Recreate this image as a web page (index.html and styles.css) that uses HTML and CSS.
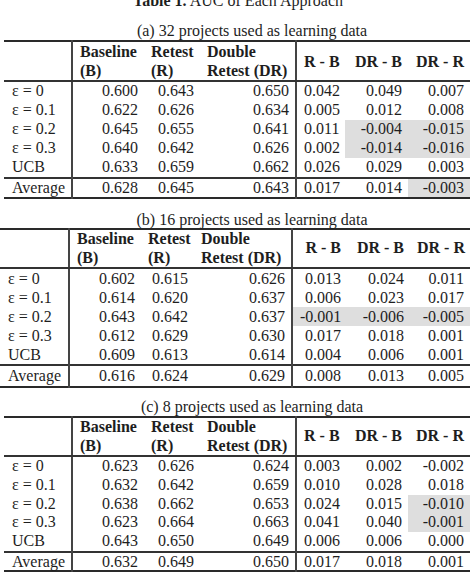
FILE: index.html
```html
<!DOCTYPE html>
<html>
<head>
<meta charset="utf-8">
<link rel="stylesheet" href="styles.css">
</head>
<body>
<div class="title"><b>Table 1.</b> AUC of Each Approach</div>

<div class="caption cap-a">(a) 32 projects used as learning data</div>
<table class="auc auc-a">
  <colgroup><col class="c1"><col class="c2"><col class="c3"><col class="c4"><col class="c5"><col class="c6"><col class="c7"></colgroup>
  <thead>
    <tr>
      <th class="lab"></th>
      <th class="hl">Baseline<br>(B)</th>
      <th class="hl">Retest<br>(R)</th>
      <th class="hl vr">Double<br>Retest (DR)</th>
      <th class="hr">R - B</th>
      <th class="hr">DR - B</th>
      <th class="hr">DR - R</th>
    </tr>
  </thead>
  <tbody>
    <tr><td class="lab">ε = 0</td><td>0.600</td><td>0.643</td><td class="vr">0.650</td><td>0.042</td><td>0.049</td><td>0.007</td></tr>
    <tr><td class="lab">ε = 0.1</td><td>0.622</td><td>0.626</td><td class="vr">0.634</td><td>0.005</td><td>0.012</td><td>0.008</td></tr>
    <tr><td class="lab">ε = 0.2</td><td>0.645</td><td>0.655</td><td class="vr">0.641</td><td>0.011</td><td class="sh">-0.004</td><td class="sh">-0.015</td></tr>
    <tr><td class="lab">ε = 0.3</td><td>0.640</td><td>0.642</td><td class="vr">0.626</td><td>0.002</td><td class="sh">-0.014</td><td class="sh">-0.016</td></tr>
    <tr><td class="lab">UCB</td><td>0.633</td><td>0.659</td><td class="vr">0.662</td><td>0.026</td><td>0.029</td><td>0.003</td></tr>
    <tr class="avg"><td class="lab">Average</td><td>0.628</td><td>0.645</td><td class="vr">0.643</td><td>0.017</td><td>0.014</td><td class="sh">-0.003</td></tr>
  </tbody>
</table>

<div class="caption cap-b">(b) 16 projects used as learning data</div>
<table class="auc auc-b">
  <colgroup><col class="c1"><col class="c2"><col class="c3"><col class="c4"><col class="c5"><col class="c6"><col class="c7"></colgroup>
  <thead>
    <tr>
      <th class="lab"></th>
      <th class="hl">Baseline<br>(B)</th>
      <th class="hl">Retest<br>(R)</th>
      <th class="hl vr">Double<br>Retest (DR)</th>
      <th class="hr">R - B</th>
      <th class="hr">DR - B</th>
      <th class="hr">DR - R</th>
    </tr>
  </thead>
  <tbody>
    <tr><td class="lab">ε = 0</td><td>0.602</td><td>0.615</td><td class="vr">0.626</td><td>0.013</td><td>0.024</td><td>0.011</td></tr>
    <tr><td class="lab">ε = 0.1</td><td>0.614</td><td>0.620</td><td class="vr">0.637</td><td>0.006</td><td>0.023</td><td>0.017</td></tr>
    <tr><td class="lab">ε = 0.2</td><td>0.643</td><td>0.642</td><td class="vr">0.637</td><td class="sh">-0.001</td><td class="sh">-0.006</td><td class="sh">-0.005</td></tr>
    <tr><td class="lab">ε = 0.3</td><td>0.612</td><td>0.629</td><td class="vr">0.630</td><td>0.017</td><td>0.018</td><td>0.001</td></tr>
    <tr><td class="lab">UCB</td><td>0.609</td><td>0.613</td><td class="vr">0.614</td><td>0.004</td><td>0.006</td><td>0.001</td></tr>
    <tr class="avg"><td class="lab">Average</td><td>0.616</td><td>0.624</td><td class="vr">0.629</td><td>0.008</td><td>0.013</td><td>0.005</td></tr>
  </tbody>
</table>

<div class="caption cap-c">(c) 8 projects used as learning data</div>
<table class="auc auc-c">
  <colgroup><col class="c1"><col class="c2"><col class="c3"><col class="c4"><col class="c5"><col class="c6"><col class="c7"></colgroup>
  <thead>
    <tr>
      <th class="lab"></th>
      <th class="hl">Baseline<br>(B)</th>
      <th class="hl">Retest<br>(R)</th>
      <th class="hl vr">Double<br>Retest (DR)</th>
      <th class="hr">R - B</th>
      <th class="hr">DR - B</th>
      <th class="hr">DR - R</th>
    </tr>
  </thead>
  <tbody>
    <tr><td class="lab">ε = 0</td><td>0.623</td><td>0.626</td><td class="vr">0.624</td><td>0.003</td><td>0.002</td><td>-0.002</td></tr>
    <tr><td class="lab">ε = 0.1</td><td>0.632</td><td>0.642</td><td class="vr">0.659</td><td>0.010</td><td>0.028</td><td>0.018</td></tr>
    <tr><td class="lab">ε = 0.2</td><td>0.638</td><td>0.662</td><td class="vr">0.653</td><td>0.024</td><td>0.015</td><td class="sh">-0.010</td></tr>
    <tr><td class="lab">ε = 0.3</td><td>0.623</td><td>0.664</td><td class="vr">0.663</td><td>0.041</td><td>0.040</td><td class="sh">-0.001</td></tr>
    <tr><td class="lab">UCB</td><td>0.643</td><td>0.650</td><td class="vr">0.649</td><td>0.006</td><td>0.006</td><td>0.000</td></tr>
    <tr class="avg"><td class="lab">Average</td><td>0.632</td><td>0.649</td><td class="vr">0.650</td><td>0.017</td><td>0.018</td><td>0.001</td></tr>
  </tbody>
</table>
</body>
</html>
```

FILE: styles.css
```css
html, body {
  margin: 0;
  padding: 0;
  background: #ffffff;
}
body {
  font-family: "Liberation Serif", "Times New Roman", serif;
  font-size: 16px;
  color: #1e1e1e;
  width: 474px;
}
.title {
  text-align: center;
  line-height: 18px;
  margin-top: -8px;
  padding-left: 2px;
}
.caption {
  text-align: center;
  line-height: 18px;
  padding-left: 30px;
}
.cap-a { margin-top: 12px; }
.cap-b { margin-top: 12.5px; line-height: 17px; }
.cap-c { margin-top: 10px; }

.auc {
  border-collapse: collapse;
  table-layout: fixed;
  border-top: 2px solid #2a2a2a;
  border-bottom: 2px solid #2a2a2a;
}
.auc-a, .auc-c { margin-left: 4px; width: 466px; }
.auc-b { margin-left: 0; width: 470px; }

.auc-a .c1, .auc-c .c1 { width: 68px; }
.auc-a .c2, .auc-c .c2 { width: 72px; }
.auc-a .c3, .auc-c .c3 { width: 56px; }
.auc-a .c4, .auc-c .c4 { width: 96px; }
.auc-a .c5, .auc-c .c5 { width: 49px; }
.auc-a .c6, .auc-c .c6 { width: 63px; }
.auc-a .c7, .auc-c .c7 { width: 62px; }

.auc-b .c1 { width: 69px; }
.auc-b .c2 { width: 72px; }
.auc-b .c3 { width: 53px; }
.auc-b .c4 { width: 98px; }
.auc-b .c5 { width: 55px; }
.auc-b .c6 { width: 63px; }
.auc-b .c7 { width: 60px; }

.auc th, .auc td {
  padding: 0 6px 0 7px;
  white-space: nowrap;
}
.auc th {
  font-weight: bold;
  line-height: 19px;
  vertical-align: middle;
  border-bottom: 2px solid #333333;
}
.auc-b th, .auc-c th { line-height: 18.5px; }
.auc th.hl { text-align: left; }
.auc th.hr { text-align: right; }
.auc td {
  text-align: right;
  line-height: 18.9px;
}
.auc-b td { line-height: 19px; }
.auc-c td { line-height: 18.8px; }
.auc td.lab {
  text-align: left;
  padding-left: 8px;
}
.auc .lab {
  border-right: 2px solid #444444;
}
.auc .vr {
  border-right: 2px solid #444444;
}
.auc .avg td {
  border-top: 2px solid #333333;
  line-height: 18px;
}
.auc-b .avg td { line-height: 20px; }
.auc-c .avg td { line-height: 17px; }
.auc td.sh {
  background: #dedede;
}
```
